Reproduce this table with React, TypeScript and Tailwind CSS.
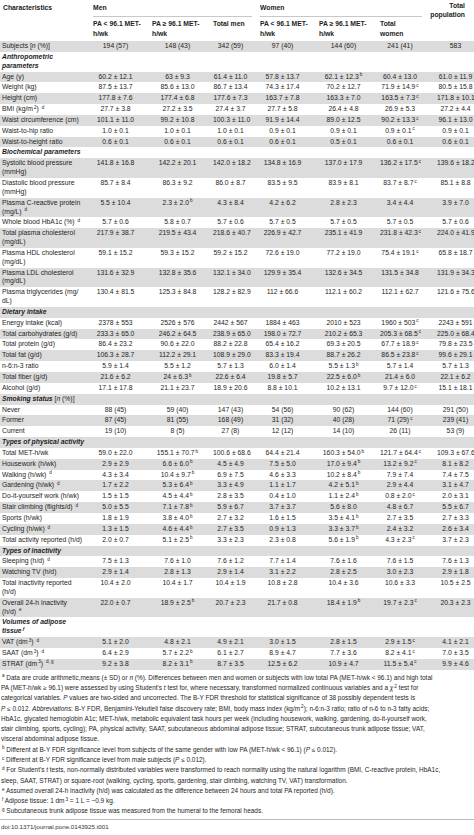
import React from 'react';

const cols = 'grid grid-cols-[93px_59px_61px_47px_59px_61px_57px_37px]';
const valPad = ['pr-[14px]', 'pr-[10px]', 'pr-[12px]', 'pr-[14px]', 'pr-[12px]', 'pr-[17px]', 'pr-0'];

const Sup = ({ c }: { c: string }) => <sup className="text-[4.6px] ml-[1px]">{c}</sup>;

// "12.3^b" -> 12.3 with a superscript b
const val = (s: string) => {
  const [t, sp] = s.split('^');
  return sp ? (
    <>
      {t}
      <Sup c={sp} />
    </>
  ) : (
    t
  );
};

type Row = { label: React.ReactNode; vals?: string[]; section?: boolean; two?: boolean };

const r = (label: React.ReactNode, data: string, two = false): Row => ({ label, vals: data.split('|'), two });
const sec = (label: React.ReactNode, two = false): Row => ({ label, section: true, two });

const rows: Row[] = [
  r(<>Subjects [<i>n</i> (%)]</>, '194 (57)|148 (43)|342 (59)|97 (40)|144 (60)|241 (41)|583'),
  sec(<>Anthropometric<br />parameters</>, true),
  r('Age (y)', '60.2 ± 12.1|63 ± 9.3|61.4 ± 11.0|57.8 ± 13.7|62.1 ± 12.3^b|60.4 ± 13.0|61.0 ± 11.9'),
  r('Weight (kg)', '87.5 ± 13.7|85.6 ± 13.0|86.7 ± 13.4|74.3 ± 17.4|70.2 ± 12.7|71.9 ± 14.9^c|80.5 ± 15.8'),
  r('Height (cm)', '177.8 ± 7.6|177.4 ± 6.8|177.6 ± 7.3|163.7 ± 7.8|163.3 ± 7.0|163.5 ± 7.3^c|171.8 ± 10.1'),
  r(<>BMI (kg/m<Sup c="2" />) <Sup c="d" /></>, '27.7 ± 3.8|27.2 ± 3.5|27.4 ± 3.7|27.7 ± 5.8|26.4 ± 4.8|26.9 ± 5.3|27.2 ± 4.4'),
  r('Waist circumference (cm)', '101.1 ± 11.0|99.2 ± 10.8|100.3 ± 11.0|91.9 ± 14.4|89.0 ± 12.5|90.2 ± 13.3^c|96.1 ± 13.0'),
  r('Waist-to-hip ratio', '1.0 ± 0.1|1.0 ± 0.1|1.0 ± 0.1|0.9 ± 0.1|0.9 ± 0.1|0.9 ± 0.1^c|0.9 ± 0.1'),
  r('Waist-to-height ratio', '0.6 ± 0.1|0.6 ± 0.1|0.6 ± 0.1|0.6 ± 0.1|0.5 ± 0.1|0.6 ± 0.1|0.6 ± 0.1'),
  sec('Biochemical parameters'),
  r(<>Systolic blood pressure<br />(mmHg)</>, '141.8 ± 16.8|142.2 ± 20.1|142.0 ± 18.2|134.8 ± 16.9|137.0 ± 17.9|136.2 ± 17.5^c|139.6 ± 18.2', true),
  r(<>Diastolic blood pressure<br />(mmHg)</>, '85.7 ± 8.4|86.3 ± 9.2|86.0 ± 8.7|83.5 ± 9.5|83.9 ± 8.1|83.7 ± 8.7^c|85.1 ± 8.8', true),
  r(<>Plasma C-reactive protein<br />(mg/L) <Sup c="d" /></>, '5.5 ± 10.4|2.3 ± 2.0^b|4.3 ± 8.4|4.2 ± 6.2|2.8 ± 2.3|3.4 ± 4.4|3.9 ± 7.0', true),
  r(<>Whole blood HbA1c (%) <Sup c="d" /></>, '5.7 ± 0.6|5.8 ± 0.7|5.7 ± 0.6|5.7 ± 0.5|5.7 ± 0.5|5.7 ± 0.5|5.7 ± 0.6'),
  r(<>Total plasma cholesterol<br />(mg/dL)</>, '217.9 ± 38.7|219.5 ± 43.4|218.6 ± 40.7|226.9 ± 42.7|235.1 ± 41.9|231.8 ± 42.3^c|224.0 ± 41.9', true),
  r(<>Plasma HDL cholesterol<br />(mg/dL)</>, '59.1 ± 15.2|59.3 ± 15.2|59.2 ± 15.2|72.6 ± 19.0|77.2 ± 19.0|75.4 ± 19.1^c|65.8 ± 18.7', true),
  r(<>Plasma LDL cholesterol<br />(mg/dL)</>, '131.6 ± 32.9|132.8 ± 35.6|132.1 ± 34.0|129.9 ± 35.4|132.6 ± 34.5|131.5 ± 34.8|131.9 ± 34.3', true),
  r(<>Plasma triglycerides (mg/<br />dL)</>, '130.4 ± 81.5|125.3 ± 84.8|128.2 ± 82.9|112 ± 66.6|112.1 ± 60.2|112.1 ± 62.7|121.6 ± 75.6', true),
  sec('Dietary intake'),
  r('Energy intake (kcal)', '2378 ± 553|2526 ± 576|2442 ± 567|1884 ± 463|2010 ± 523|1960 ± 503^c|2243 ± 591'),
  r('Total carbohydrates (g/d)', '233.3 ± 65.0|246.2 ± 64.5|238.9 ± 65.0|198.0 ± 72.7|210.2 ± 65.3|205.3 ± 68.5^c|225.0 ± 68.4'),
  r('Total protein (g/d)', '86.4 ± 23.2|90.6 ± 22.0|88.2 ± 22.8|65.4 ± 16.2|69.3 ± 20.5|67.7 ± 18.9^c|79.8 ± 23.5'),
  r('Total fat (g/d)', '106.3 ± 28.7|112.2 ± 29.1|108.9 ± 29.0|83.3 ± 19.4|88.7 ± 26.2|86.5 ± 23.8^c|99.6 ± 29.1'),
  r('n-6:n-3 ratio', '5.9 ± 1.4|5.5 ± 1.2|5.7 ± 1.3|6.0 ± 1.4|5.5 ± 1.3^b|5.7 ± 1.4|5.7 ± 1.3'),
  r('Total fiber (g/d)', '21.6 ± 6.2|24 ± 6.3^b|22.6 ± 6.4|19.8 ± 5.7|22.5 ± 6.0^b|21.4 ± 6.0|22.1 ± 6.2'),
  r('Alcohol (g/d)', '17.1 ± 17.8|21.1 ± 23.7|18.9 ± 20.6|8.8 ± 10.1|10.2 ± 13.1|9.7 ± 12.0^c|15.1 ± 18.1'),
  sec(<>Smoking status <span className="font-normal not-italic">[<i>n</i> (%)]</span></>),
  r('Never', '88 (45)|59 (40)|147 (43)|54 (56)|90 (62)|144 (60)|291 (50)'),
  r('Former', '87 (45)|81 (55)|168 (49)|31 (32)|40 (28)|71 (29)^c|239 (41)'),
  r('Current', '19 (10)|8 (5)|27 (8)|12 (12)|14 (10)|26 (11)|53 (9)'),
  sec('Types of physical activity'),
  r('Total MET-h/wk', '59.0 ± 22.0|155.1 ± 70.7^b|100.6 ± 68.6|64.4 ± 21.4|160.3 ± 54.0^b|121.7 ± 64.4^c|109.3 ± 67.6'),
  r('Housework (h/wk)', '2.9 ± 2.9|6.6 ± 6.0^b|4.5 ± 4.9|7.5 ± 5.0|17.0 ± 9.4^b|13.2 ± 9.2^c|8.1 ± 8.2'),
  r(<>Walking (h/wk) <Sup c="d" /></>, '4.3 ± 3.4|10.4 ± 9.7^b|6.9 ± 7.5|4.6 ± 3.3|10.2 ± 8.4^b|7.9 ± 7.4|7.4 ± 7.5'),
  r(<>Gardening (h/wk) <Sup c="d" /></>, '1.7 ± 2.2|5.3 ± 6.4^b|3.3 ± 4.9|1.1 ± 1.7|4.2 ± 5.1^b|2.9 ± 4.4|3.1 ± 4.7'),
  r('Do-it-yourself work (h/wk)', '1.5 ± 1.5|4.5 ± 4.4^b|2.8 ± 3.5|0.4 ± 1.0|1.1 ± 2.4^b|0.8 ± 2.0^c|2.0 ± 3.1'),
  r(<>Stair climbing (flights/d) <Sup c="d" /></>, '5.0 ± 5.5|7.1 ± 7.8^b|5.9 ± 6.7|3.7 ± 3.7|5.6 ± 8.0|4.8 ± 6.7|5.5 ± 6.7'),
  r('Sports (h/wk)', '1.8 ± 1.9|3.8 ± 4.0^b|2.7 ± 3.2|1.6 ± 1.5|3.5 ± 4.1^b|2.7 ± 3.5|2.7 ± 3.3'),
  r(<>Cycling (h/wk) <Sup c="d" /></>, '1.3 ± 1.5|4.6 ± 4.4^b|2.7 ± 3.5|0.9 ± 1.3|3.3 ± 3.7^b|2.4 ± 3.2|2.6 ± 3.4'),
  r('Total activity reported (h/d)', '2.0 ± 0.7|5.1 ± 2.5^b|3.3 ± 2.3|2.3 ± 0.8|5.6 ± 1.9^b|4.3 ± 2.3^c|3.7 ± 2.3'),
  sec('Types of inactivity'),
  r(<>Sleeping (h/d) <Sup c="d" /></>, '7.5 ± 1.3|7.6 ± 1.0|7.6 ± 1.2|7.7 ± 1.4|7.6 ± 1.6|7.6 ± 1.5|7.6 ± 1.3'),
  r('Watching TV (h/d)', '2.9 ± 1.4|2.8 ± 1.3|2.9 ± 1.4|3.1 ± 2.2|2.8 ± 2.5|3.0 ± 2.3|2.9 ± 1.8'),
  r(<>Total inactivity reported<br />(h/d)</>, '10.4 ± 2.0|10.4 ± 1.7|10.4 ± 1.9|10.8 ± 2.8|10.4 ± 3.6|10.6 ± 3.3|10.5 ± 2.5', true),
  r(<>Overall 24-h inactivity<br />(h/d) <Sup c="e" /></>, '22.0 ± 0.7|18.9 ± 2.5^b|20.7 ± 2.3|21.7 ± 0.8|18.4 ± 1.9^b|19.7 ± 2.3^c|20.3 ± 2.3', true),
  sec(<>Volumes of adipose<br />tissue<Sup c="f" /></>, true),
  r(<>VAT (dm<Sup c="3" />) <Sup c="d" /></>, '5.1 ± 2.0|4.8 ± 2.1|4.9 ± 2.1|3.0 ± 1.5|2.8 ± 1.5|2.9 ± 1.5^c|4.1 ± 2.1'),
  r(<>SAAT (dm<Sup c="3" />) <Sup c="d" /></>, '6.4 ± 2.9|5.7 ± 2.2^b|6.1 ± 2.7|8.9 ± 4.7|7.7 ± 3.6|8.2 ± 4.1^c|7.0 ± 3.5'),
  r(<>STRAT (dm<Sup c="3" />) <Sup c="d, g" /></>, '9.2 ± 3.8|8.2 ± 3.1^b|8.7 ± 3.5|12.5 ± 6.2|10.9 ± 4.7|11.5 ± 5.4^c|9.9 ± 4.6'),
];

const notes: React.ReactNode[] = [
  <><Sup c="a" /> Data are crude arithmetic,means (± SD) or <i>n</i> (%). Differences between men and women or subjects with low total PA (MET-h/wk &lt; 96.1) and high total</>,
  <>PA (MET-h/wk ≥ 96.1) were assessed by using Student's <i>t</i> test for, where necessary, transformed normalized continuous variables and a <i>χ</i><Sup c="2" /> test for</>,
  <>categorical variables. <i>P</i> values are two-sided and uncorrected. The B-Y FDR threshold for statistical significance of 38 possibly dependent tests is</>,
  <><i>P</i> ≤ 0.012. <i>Abbreviations</i>: B-Y FDR, Benjamini-Yekutieli false discovery rate; BMI, body mass index (kg/m<Sup c="2" />); n-6:n-3 ratio; ratio of n-6 to n-3 fatty acids;</>,
  <>HbA1c, glycated hemoglobin A1c; MET-h/wk, metabolic equivalent task hours per week (including housework, walking, gardening, do-it-yourself work,</>,
  <>stair climbing, sports, cycling); PA, physical activity; SAAT, subcutaneous abdominal adipose tissue; STRAT, subcutaneous trunk adipose tissue; VAT,</>,
  <>visceral abdominal adipose tissue.</>,
  <><Sup c="b" /> Different at B-Y FDR significance level from subjects of the same gender with low PA (MET-h/wk &lt; 96.1) (<i>P</i> ≤ 0.012).</>,
  <><Sup c="c" /> Different at B-Y FDR significance level from male subjects (<i>P</i> ≤ 0.012).</>,
  <><Sup c="d" /> For Student's <i>t</i> tests, non-normally distributed variables were transformed to reach normality using the natural logarithm (BMI, C-reactive protein, HbA1c,</>,
  <>sleep, SAAT, STRAT) or square-root (walking, cycling, sports, gardening, stair climbing, watching TV, VAT) transformation.</>,
  <><Sup c="e" /> Assumed overall 24-h inactivity (h/d) was calculated as the difference between 24 hours and total PA reported (h/d).</>,
  <><Sup c="f" /> Adipose tissue: 1 dm<Sup c="3" /> = 1 L = ~0.9 kg.</>,
  <><Sup c="g" /> Subcutaneous trunk adipose tissue was measured from the humeral to the femoral heads.</>,
];

export default function App() {
  return (
    <div className="w-[474px] h-[835px] overflow-hidden bg-white text-[#1e1e1e] font-['Liberation_Sans',Arial,sans-serif] text-[6.8px]">
      {/* header */}
      <div className={`${cols} font-bold text-[#222]`}>
        <div className="row-span-2 pl-[3px] pt-[3px] leading-[9px]">Characteristics</div>
        <div className="col-span-3 pt-[3px]">
          <div className="leading-[9px] pb-[4px] mr-[8px] border-b border-[#c8c8c8]">Men</div>
        </div>
        <div className="col-span-3 pt-[3px]">
          <div className="leading-[9px] pb-[4px] mr-[15px] border-b border-[#c8c8c8]">Women</div>
        </div>
        <div className="row-span-2 pt-[2px] pr-[9px] flex justify-end">
          <div className="text-right leading-[8.5px] whitespace-nowrap">Total<br />population</div>
        </div>
        <div className="pt-[2px] pb-[1px] leading-[10px]">PA &lt; 96.1 MET-<br />h/wk</div>
        <div className="pt-[2px] pb-[1px] leading-[10px]">PA ≥ 96.1 MET-<br />h/wk</div>
        <div className="pt-[2px] pb-[1px] leading-[10px]">Total men</div>
        <div className="pt-[2px] pb-[1px] leading-[10px]">PA &lt; 96.1 MET-<br />h/wk</div>
        <div className="pt-[2px] pb-[1px] leading-[10px]">PA ≥ 96.1 MET-<br />h/wk</div>
        <div className="pt-[2px] pb-[1px] leading-[10px]">Total<br />women</div>
      </div>

      {/* body */}
      <div className="mt-[1px]">
        {rows.map((row, i) => (
          <div key={i} className={`${cols} ${i % 2 === 0 ? 'bg-[#dcdcdc]' : 'bg-white'} py-[1px] leading-[8.85px]`}>
            <div className={`pl-[2px] whitespace-nowrap ${row.section ? 'font-bold italic col-span-8' : ''}`}>{row.label}</div>
            {row.vals?.map((v, j) => (
              <div key={j} className={`text-center whitespace-nowrap ${valPad[j]}`}>
                {val(v)}
              </div>
            ))}
          </div>
        ))}
      </div>

      {/* footnotes */}
      <div className="mt-[3px] px-[1px] text-[6.45px] leading-[10.3px]">
        {notes.map((n, i) => (
          <div key={i} className="whitespace-nowrap">{n}</div>
        ))}
      </div>
      <div className="mt-[2px] border-t border-[#bdbdbd] pt-[2px] px-[1px] text-[6.2px] leading-[9px] text-[#333]">
        doi:10.1371/journal.pone.0143925.t001
      </div>
    </div>
  );
}
